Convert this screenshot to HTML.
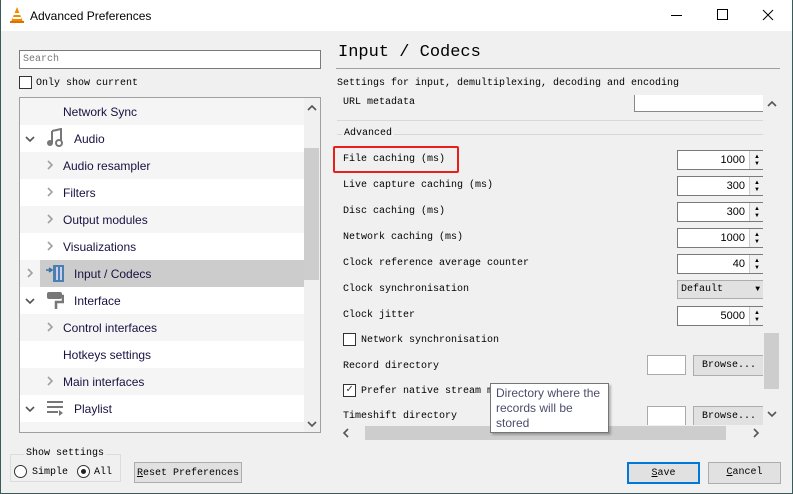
<!DOCTYPE html>
<html><head><meta charset="utf-8"><style>
*{margin:0;padding:0;box-sizing:border-box}
body{width:793px;height:494px;background:#f0f0f0;position:relative;overflow:hidden;font-family:"Liberation Mono",monospace;font-size:10px;line-height:15px;color:#000}
.a{position:absolute}
.ui{font-family:"Liberation Sans",sans-serif;font-size:12px}
.row{position:absolute;left:20px;width:284px;height:27px;font-family:"Liberation Sans",sans-serif;font-size:12px;line-height:29px;color:#1a1040}
.g{background:#f5f5f5}.w{background:#fff}
.chev{position:absolute}
.spin{position:absolute;left:677px;width:87px;height:20px;background:#fff;border:1px solid #7a7a7a;text-align:right;padding-right:18px;font-family:"Liberation Sans",sans-serif;font-size:11px;line-height:19px}
.spin:after{content:"";position:absolute;right:0;top:0;width:13px;height:18px;border-left:1px solid #ccc;background:#f0f0f0}
.spin i{position:absolute;right:3px;font-style:normal;font-size:6px;z-index:2;line-height:6px}
.lbl{position:absolute;left:343px}
.btn{position:absolute;background:#e1e1e1;border:1px solid #adadad;text-align:center}
</style></head><body>
<svg width="0" height="0" style="position:absolute"><defs>
<symbol id="r" viewBox="0 0 8 10"><path d="M2 1L6 5L2 9" stroke="#a0a0a0" stroke-width="1.6" fill="none"/></symbol>
<symbol id="d" viewBox="0 0 10 8"><path d="M1 2L5 6L9 2" stroke="#555" stroke-width="1.6" fill="none"/></symbol>
<symbol id="u" viewBox="0 0 10 8"><path d="M1 6L5 2L9 6" stroke="#555" stroke-width="1.6" fill="none"/></symbol>
<symbol id="l" viewBox="0 0 8 10"><path d="M6 1L2 5L6 9" stroke="#555" stroke-width="1.6" fill="none"/></symbol>
</defs></svg>
<div class="a" style="left:0;top:0;width:793px;height:494px;border:1px solid #3b5a5a;border-top:none"></div>
<div class="a" style="left:1px;top:0;width:791px;height:31px;background:#fff"></div>
<svg class="a" style="left:9px;top:6px" width="16" height="18"><path d="M8 1 L14 16 L2 16 Z" fill="#f08a00"/><rect x="5" y="7" width="6" height="2" fill="#fff"/><rect x="4" y="11" width="8" height="2" fill="#fff"/><rect x="1" y="15" width="14" height="2" fill="#e07000"/></svg>
<div class="a ui" style="left:30px;top:8px;font-size:12px;line-height:16px">Advanced Preferences</div>
<div class="a" style="left:671px;top:15px;width:11px;height:1px;background:#000"></div>
<div class="a" style="left:717px;top:9px;width:11px;height:11px;border:1px solid #000"></div>
<svg class="a" style="left:762px;top:9px" width="12" height="12"><path d="M1 1L11 11M11 1L1 11" stroke="#000"/></svg>

<div class="a" style="left:19px;top:50px;width:302px;height:19px;background:#fff;border:1px solid #7a7a7a;color:#777;padding:1px 3px">Search</div>
<div class="a" style="left:19px;top:76px;width:13px;height:13px;background:#fff;border:1px solid #333"></div>
<div class="a" style="left:36px;top:76px">Only show current</div>

<div class="a" style="left:19px;top:97px;width:302px;height:336px;border:1px solid #a0a0a0;background:#fff;overflow:hidden"></div>
<div class="row g" style="top:98px;padding-left:43px">Network Sync</div>
<div class="row w" style="top:125px;padding-left:54px">Audio</div>
<svg class="a" style="left:46px;top:128px" width="18" height="20"><path d="M6 3 L15 1 L15 13" stroke="#777" stroke-width="2" fill="none"/><path d="M6 3 L6 15" stroke="#777" stroke-width="2"/><circle cx="4" cy="15" r="3" fill="#777"/><circle cx="13" cy="15" r="3" fill="none" stroke="#777" stroke-width="2"/></svg>
<div class="row g" style="top:152px;padding-left:43px">Audio resampler</div>
<div class="row w" style="top:179px;padding-left:43px">Filters</div>
<div class="row g" style="top:206px;padding-left:43px">Output modules</div>
<div class="row w" style="top:233px;padding-left:43px">Visualizations</div>
<div class="row g" style="top:260px"></div>
<div class="a" style="left:40px;top:260px;width:264px;height:27px;background:#cccccc"></div>
<div class="a ui" style="left:74px;top:267px;color:#1a1040;line-height:15px">Input / Codecs</div>
<svg class="a" style="left:45px;top:263px" width="20" height="20"><path d="M1 7H6M4 5L7 7L4 9" stroke="#3a6fa0" stroke-width="1.5" fill="none"/><rect x="8" y="2" width="11" height="17" fill="#4a80b0"/><rect x="11" y="4" width="2" height="13" fill="#cce"/><rect x="15" y="4" width="2" height="13" fill="#cce"/></svg>
<div class="row w" style="top:287px;padding-left:54px">Interface</div>
<svg class="a" style="left:46px;top:291px" width="18" height="20"><rect x="1" y="1" width="15" height="7" rx="2" fill="#777"/><path d="M16 5 L17 5 L17 11 L10 11 L10 18" stroke="#777" stroke-width="2.5" fill="none"/></svg>
<div class="row g" style="top:314px;padding-left:43px">Control interfaces</div>
<div class="row w" style="top:341px;padding-left:43px">Hotkeys settings</div>
<div class="row g" style="top:368px;padding-left:43px">Main interfaces</div>
<div class="row w" style="top:395px;padding-left:54px">Playlist</div>
<svg class="a" style="left:46px;top:399px" width="18" height="18"><path d="M1 3H17M1 8H17M1 13H12" stroke="#777" stroke-width="2"/><path d="M13 11L17 14L13 17Z" fill="#777"/></svg>
<div class="row g" style="top:422px;height:10px"></div>
<svg class="chev" style="left:25px;top:135px" width="10" height="8"><use href="#d"/></svg>
<svg class="chev" style="left:46px;top:160px" width="8" height="10"><use href="#r"/></svg>
<svg class="chev" style="left:46px;top:187px" width="8" height="10"><use href="#r"/></svg>
<svg class="chev" style="left:46px;top:214px" width="8" height="10"><use href="#r"/></svg>
<svg class="chev" style="left:46px;top:241px" width="8" height="10"><use href="#r"/></svg>
<svg class="chev" style="left:26px;top:268px" width="8" height="10"><use href="#r"/></svg>
<svg class="chev" style="left:25px;top:297px" width="10" height="8"><use href="#d"/></svg>
<svg class="chev" style="left:46px;top:322px" width="8" height="10"><use href="#r"/></svg>
<svg class="chev" style="left:46px;top:376px" width="8" height="10"><use href="#r"/></svg>
<svg class="chev" style="left:25px;top:405px" width="10" height="8"><use href="#d"/></svg>
<div class="a" style="left:304px;top:98px;width:16px;height:334px;background:#f0f0f0"></div>
<div class="a" style="left:304px;top:148px;width:15px;height:132px;background:#cdcdcd"></div>
<svg class="chev" style="left:307px;top:104px" width="10" height="8"><use href="#u"/></svg>
<svg class="chev" style="left:307px;top:420px" width="10" height="8"><use href="#d"/></svg>

<div class="a" style="left:10px;top:454px;width:111px;height:28px;border:1px solid #dcdcdc"></div>
<div class="a" style="left:24px;top:446px;background:#f0f0f0;padding:0 2px">Show settings</div>
<div class="a" style="left:14px;top:465px;width:13px;height:13px;border-radius:50%;border:1px solid #333;background:#fff"></div>
<div class="a" style="left:32px;top:465px">Simple</div>
<div class="a" style="left:77px;top:465px;width:13px;height:13px;border-radius:50%;border:1px solid #333;background:#fff"></div>
<div class="a" style="left:81px;top:469px;width:5px;height:5px;border-radius:50%;background:#222"></div>
<div class="a" style="left:94px;top:465px">All</div>
<div class="btn" style="left:134px;top:462px;width:108px;height:21px;line-height:21px"><u>R</u>eset Preferences</div>

<div class="a" style="left:338px;top:43px;font-size:17px;line-height:20px">Input / Codecs</div>
<div class="a" style="left:336px;top:68px;width:444px;height:1px;background:#a0a0a0"></div>
<div class="a" style="left:337px;top:76px">Settings for input, demultiplexing, decoding and encoding</div>
<div class="lbl" style="top:95px">URL metadata</div>
<div class="a" style="left:634px;top:95px;width:129px;height:17px;background:#fff;border-left:1px solid #888;border-bottom:1px solid #888"></div>
<div class="a" style="left:337px;top:120px;width:426px;height:1px;background:#d8d8d8"></div>
<div class="a" style="left:337px;top:134px;width:426px;height:1px;background:#d8d8d8"></div>
<div class="a" style="left:342px;top:126px;background:#f0f0f0;padding:0 2px">Advanced</div>
<div class="a" style="left:333px;top:146px;width:126px;height:27px;border:2px solid #e8201c;border-radius:2px"></div>
<div class="lbl" style="top:152px">File caching (ms)</div>
<div class="spin" style="top:150px">1000<i style="top:3px">▲</i><i style="top:10px">▼</i></div>
<div class="lbl" style="top:178px">Live capture caching (ms)</div>
<div class="spin" style="top:176px">300<i style="top:3px">▲</i><i style="top:10px">▼</i></div>
<div class="lbl" style="top:204px">Disc caching (ms)</div>
<div class="spin" style="top:202px">300<i style="top:3px">▲</i><i style="top:10px">▼</i></div>
<div class="lbl" style="top:230px">Network caching (ms)</div>
<div class="spin" style="top:228px">1000<i style="top:3px">▲</i><i style="top:10px">▼</i></div>
<div class="lbl" style="top:256px">Clock reference average counter</div>
<div class="spin" style="top:254px">40<i style="top:3px">▲</i><i style="top:10px">▼</i></div>
<div class="lbl" style="top:282px">Clock synchronisation</div>
<div class="a" style="left:677px;top:280px;width:87px;height:19px;background:#e1e1e1;border:1px solid #adadad;padding:1px 3px">Default<span style="position:absolute;right:3px;top:1px;font-size:8px">▼</span></div>
<div class="lbl" style="top:308px">Clock jitter</div>
<div class="spin" style="top:306px">5000<i style="top:3px">▲</i><i style="top:10px">▼</i></div>
<div class="a" style="left:343px;top:333px;width:13px;height:13px;border:1px solid #333;background:#fff"></div>
<div class="a" style="left:361px;top:333px">Network synchronisation</div>
<div class="lbl" style="top:359px">Record directory</div>
<div class="a" style="left:647px;top:355px;width:39px;height:20px;background:#fff;border:1px solid #aaa"></div>
<div class="btn" style="left:693px;top:355px;width:71px;height:21px;line-height:20px;text-align:left;padding-left:8px">Browse...</div>
<div class="a" style="left:343px;top:384px;width:13px;height:13px;border:1px solid #333;background:#fff;font-size:11px;line-height:11px;text-align:center;color:#333">✓</div>
<div class="a" style="left:361px;top:384px">Prefer native stream m</div>
<div class="lbl" style="top:409px">Timeshift directory</div>
<div class="a" style="left:647px;top:406px;width:39px;height:19px;background:#fff;border:1px solid #aaa;border-bottom:none"></div>
<div class="btn" style="left:693px;top:406px;width:71px;height:19px;line-height:20px;text-align:left;padding-left:8px;border-bottom:none">Browse...</div>
<div class="a" style="left:763px;top:92px;width:17px;height:333px;background:#f0f0f0"></div>
<div class="a" style="left:764px;top:333px;width:15px;height:56px;background:#cdcdcd"></div>
<svg class="chev" style="left:767px;top:100px" width="10" height="8"><use href="#u"/></svg>
<svg class="chev" style="left:767px;top:410px" width="10" height="8"><use href="#d"/></svg>
<div class="a" style="left:336px;top:425px;width:427px;height:16px;background:#f0f0f0"></div>
<div class="a" style="left:365px;top:426px;width:361px;height:14px;background:#cdcdcd"></div>
<svg class="chev" style="left:342px;top:428px" width="8" height="10"><use href="#l"/></svg>
<svg class="chev" style="left:752px;top:428px" width="8" height="10" style="transform:scaleX(-1)"><path d="M2 1L6 5L2 9" stroke="#555" stroke-width="1.6" fill="none"/></svg>

<div class="a ui" style="left:490px;top:383px;width:119px;height:50px;background:#fff;border:1px solid #767676;box-shadow:2px 2px 2px rgba(0,0,0,.25);color:#4c4c6c;padding:2px 5px;line-height:15px;font-size:12px">Directory where the records will be stored</div>

<div class="btn" style="left:627px;top:462px;width:73px;height:22px;line-height:19px;border:2px solid #0078d7"><u>S</u>ave</div>
<div class="btn" style="left:708px;top:462px;width:73px;height:22px;line-height:20px"><u>C</u>ancel</div>
</body></html>
